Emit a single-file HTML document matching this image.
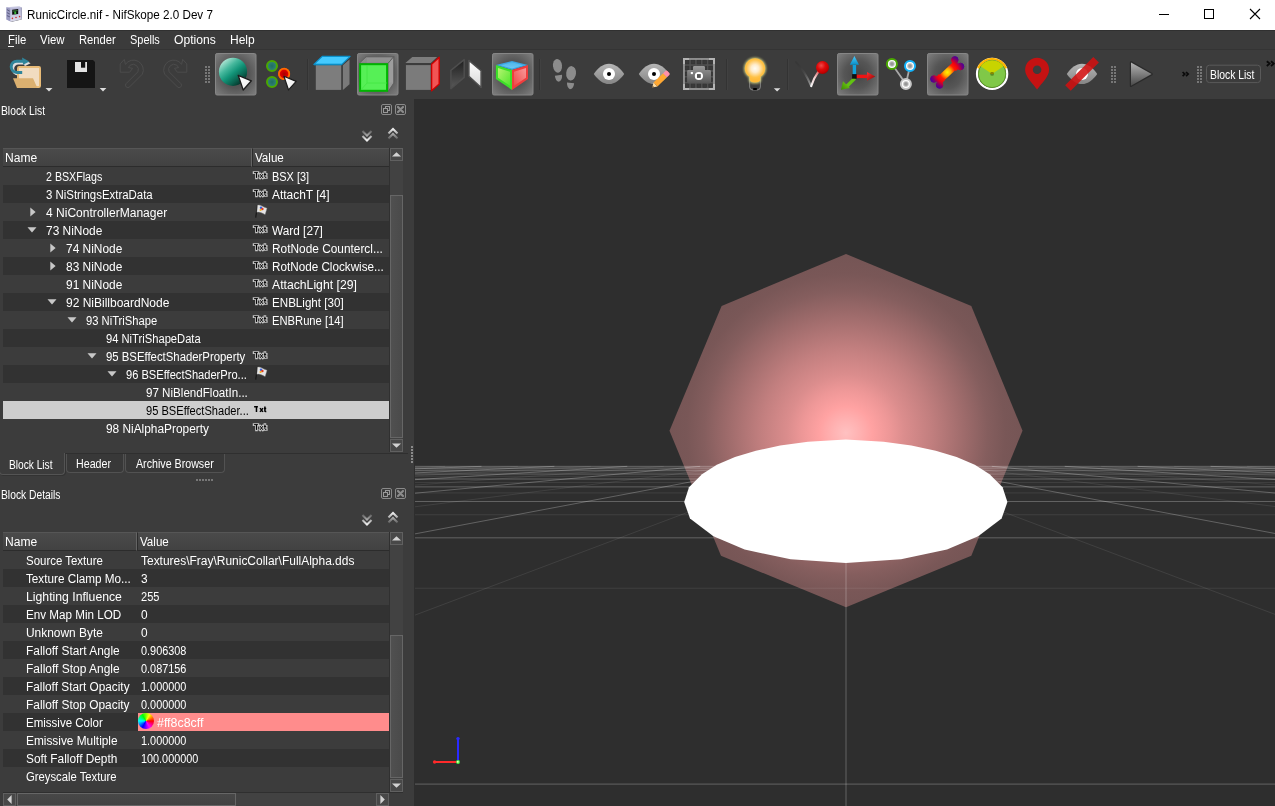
<!DOCTYPE html>
<html><head><meta charset="utf-8"><title>NifSkope</title>
<style>
*{box-sizing:border-box}
html,body{margin:0;padding:0}
body{width:1275px;height:806px;overflow:hidden;position:relative;background:#3c3c3c;font-family:"Liberation Sans",sans-serif;font-size:12px;color:#fff;line-height:18px}
.a{position:absolute}
.t{position:absolute;white-space:nowrap;transform-origin:0 50%;height:18px;line-height:18px}
#title{left:0;top:0;width:1275px;height:30px;background:#fff}
#menu{left:0;top:30px;width:1275px;height:20px;background:#3b3b3b;border-bottom:1px solid #343434;border-top:1px solid #303030}
#tool{left:0;top:50px;width:1275px;height:49px;background:#3c3c3c}
.chk{position:absolute;border-radius:3px;background:radial-gradient(ellipse at center,#4a4a4a 0%,#5a5a5a 60%,#6e6e6e 100%);border:1px solid #707070}
.sep{position:absolute;width:1px;background:#353535;top:59px;height:31px}
.row{position:absolute;left:3px;width:386px;height:18px}
.r0{background:#3c3c3c}.r1{background:#323232}
.hdr{position:absolute;height:19px;background:linear-gradient(#4a4a4a,#424242);border-top:1px solid #565656;border-bottom:1px solid #2c2c2c}
.sb{position:absolute;background:#424242}
.sbb{position:absolute;background:#484848;border:1px solid #606060}
.sbh{position:absolute;background:linear-gradient(90deg,#505050,#4a4a4a);border:1px solid #666}
.tab{position:absolute;border:1px solid #2d2d2d;border-top:none;border-radius:0 0 4px 4px;background:#3c3c3c}
.dbtn{position:absolute;width:11px;height:11px;border:1px solid #8a8a8a;border-radius:2px}
</style></head><body>

<div id="title" class="a"></div>
<svg class="a" style="left:6px;top:6px" width="16" height="16" viewBox="0 0 16 16">
<defs><linearGradient id="ic1" x1="0" y1="0" x2="0" y2="1"><stop offset="0" stop-color="#b4b4d4"/><stop offset="1" stop-color="#dcdcec"/></linearGradient></defs>
<path d="M4.6 15.6L15.8 12.9L15.8 13.6L4.9 16Z" fill="#6a6a78"/>
<path d="M0.4 1.3L13.4 0.3L15.6 1.5L15.6 12.8L4.5 15.6L0.4 13.4Z" fill="#c6c6e0"/>
<path d="M0.4 1.3L4.5 2.6L4.5 15.6L0.4 13.4Z" fill="#9a9ac0"/>
<path d="M4.5 2.6L15.6 1.5L15.6 12.8L4.5 15.6Z" fill="url(#ic1)"/>
<path d="M14.9 1.6L15.6 1.5L15.6 12.8L14.9 13Z" fill="#8c8ca8"/>
<path d="M6.2 3.8L12.2 3.1L12.2 7.9L6.2 8.8Z" fill="#0c0c0c"/>
<path d="M6.7 4.5L11.7 3.9L11.7 5.1L6.7 5.7Z" fill="#356e35"/>
<rect x="8.3" y="5.5" width="1.9" height="2.6" fill="#3cb83c"/>
<circle cx="6.4" cy="12.4" r="0.8" fill="#d03030"/><circle cx="10" cy="11.5" r="0.8" fill="#d03030"/><circle cx="13.6" cy="10.6" r="0.8" fill="#d03030"/>
<path d="M0.9 3.6L3.8 5.2M0.9 6.6L3.8 8M0.9 9.6L3.8 10.8" stroke="#56567a" stroke-width="0.9"/>
</svg>
<span class="t" style="left:27.3px;top:5.5px;transform:scaleX(0.9713);color:#000;">RunicCircle.nif - NifSkope 2.0 Dev 7</span>
<svg class="a" style="left:1150px;top:0" width="125" height="30" viewBox="0 0 125 30">
<path d="M9 14.5H19" stroke="#000" stroke-width="1"/>
<rect x="54.5" y="9.5" width="9" height="9" fill="none" stroke="#000" stroke-width="1"/>
<path d="M100 9L110 19M110 9L100 19" stroke="#000" stroke-width="1.1"/>
</svg>
<div id="menu" class="a"></div>
<span class="t" style="left:8.0px;top:31.0px;transform:scaleX(0.9460);color:#fff;">File</span>
<span class="t" style="left:40.3px;top:31.0px;transform:scaleX(0.9497);color:#fff;">View</span>
<span class="t" style="left:79.2px;top:31.0px;transform:scaleX(0.9350);color:#fff;">Render</span>
<span class="t" style="left:130.2px;top:31.0px;transform:scaleX(0.9117);color:#fff;">Spells</span>
<span class="t" style="left:174.3px;top:31.0px;transform:scaleX(1.0086);color:#fff;">Options</span>
<span class="t" style="left:230.3px;top:31.0px;transform:scaleX(1.0005);color:#fff;">Help</span>
<div class="a" style="left:8px;top:46px;width:6px;height:1px;background:#f0f0f0"></div>
<div id="tool" class="a"></div>
<svg class="a" style="left:0;top:50px" width="1275" height="49" viewBox="0 50 1275 49">
<defs>
<radialGradient id="ck" cx="0.5" cy="0.5" r="0.75"><stop offset="0" stop-color="#454545"/><stop offset="0.45" stop-color="#565656"/><stop offset="1" stop-color="#858585"/></radialGradient>
<linearGradient id="sph" x1="0.18" y1="0.1" x2="0.85" y2="0.92"><stop offset="0" stop-color="#aee4d3"/><stop offset="0.28" stop-color="#46b89d"/><stop offset="0.52" stop-color="#129478"/><stop offset="0.78" stop-color="#0a5f4c"/><stop offset="1" stop-color="#042a22"/></linearGradient>
<linearGradient id="cur" x1="0" y1="0" x2="1" y2="1"><stop offset="0" stop-color="#fff"/><stop offset="0.6" stop-color="#f4f4f4"/><stop offset="1" stop-color="#bdbdbd"/></linearGradient>
<linearGradient id="eyeg" x1="0" y1="0" x2="0" y2="1"><stop offset="0" stop-color="#b6b6b6"/><stop offset="1" stop-color="#858585"/></linearGradient>
<linearGradient id="camg" x1="0" y1="0" x2="0" y2="1"><stop offset="0" stop-color="#9a9a9a"/><stop offset="1" stop-color="#555"/></linearGradient>
<linearGradient id="plg" x1="0" y1="0" x2="0" y2="1"><stop offset="0" stop-color="#b4b4b4"/><stop offset="1" stop-color="#484848"/></linearGradient>
<linearGradient id="mdk" x1="0" y1="0" x2="0" y2="1"><stop offset="0" stop-color="#1e1e1e"/><stop offset="1" stop-color="#5a5a5a"/></linearGradient>
<linearGradient id="mwh" x1="0" y1="0" x2="0" y2="1"><stop offset="0" stop-color="#fff"/><stop offset="1" stop-color="#d8d8d8"/></linearGradient>
<radialGradient id="bulb" gradientUnits="userSpaceOnUse" cx="755" cy="68.5" r="11"><stop offset="0" stop-color="#fffdf4"/><stop offset="0.35" stop-color="#ffeccc"/><stop offset="0.8" stop-color="#ffc248"/><stop offset="1" stop-color="#ffba3a"/></radialGradient>
<radialGradient id="bone" gradientUnits="userSpaceOnUse" cx="947.3" cy="72.3" r="18"><stop offset="0" stop-color="#fff200"/><stop offset="0.2" stop-color="#ffb000"/><stop offset="0.42" stop-color="#ff1a00"/><stop offset="0.62" stop-color="#f00010"/><stop offset="0.85" stop-color="#7a0070"/><stop offset="1" stop-color="#4a0098"/></radialGradient>
<radialGradient id="ball" cx="0.4" cy="0.35" r="0.7"><stop offset="0" stop-color="#f04a4a"/><stop offset="0.45" stop-color="#de0a0a"/><stop offset="0.8" stop-color="#c40000"/><stop offset="1" stop-color="#960000"/></radialGradient>
<radialGradient id="nd" cx="0.5" cy="0.5" r="0.5"><stop offset="0" stop-color="#8c8c8c"/><stop offset="0.35" stop-color="#a8a8a8"/><stop offset="0.7" stop-color="#fff"/><stop offset="1" stop-color="#fff"/></radialGradient>
<radialGradient id="tl" cx="0.5" cy="0.5" r="0.5"><stop offset="0" stop-color="#1f6e60"/><stop offset="1" stop-color="#33857a"/></radialGradient>
<radialGradient id="rd" cx="0.5" cy="0.5" r="0.5"><stop offset="0" stop-color="#a80000"/><stop offset="0.6" stop-color="#d80000"/><stop offset="1" stop-color="#ff4a00"/></radialGradient>
<linearGradient id="cgG" x1="0" y1="0" x2="1" y2="1"><stop offset="0" stop-color="#b6f470"/><stop offset="1" stop-color="#52e62e"/></linearGradient><linearGradient id="cgR" x1="1" y1="0" x2="0" y2="1"><stop offset="0" stop-color="#f99a9a"/><stop offset="1" stop-color="#f04848"/></linearGradient><linearGradient id="cgB" x1="0" y1="0" x2="0" y2="1"><stop offset="0" stop-color="#4eb6ea"/><stop offset="1" stop-color="#6cc8f2"/></linearGradient>
<filter id="glow" x="-30%" y="-30%" width="160%" height="160%"><feGaussianBlur stdDeviation="0.9"/></filter>
<linearGradient id="bl" x1="0" y1="0" x2="0" y2="1"><stop offset="0" stop-color="#48ccff"/><stop offset="1" stop-color="#0a8ec4"/></linearGradient>
<linearGradient id="rdA" x1="0" y1="0" x2="1" y2="1"><stop offset="0" stop-color="#ff3030"/><stop offset="1" stop-color="#900000"/></linearGradient>
<linearGradient id="gnA" x1="1" y1="0" x2="0" y2="1"><stop offset="0" stop-color="#7ad818"/><stop offset="1" stop-color="#3a8800"/></linearGradient>
<linearGradient id="chkL" gradientUnits="userSpaceOnUse" x1="796" y1="62" x2="811" y2="86"><stop offset="0" stop-color="#2c2c2c" stop-opacity="0.3"/><stop offset="0.5" stop-color="#4a4a4a"/><stop offset="1" stop-color="#9a9a9a"/></linearGradient>
<linearGradient id="chkR" gradientUnits="userSpaceOnUse" x1="811" y1="86" x2="818" y2="72"><stop offset="0" stop-color="#f4f4f4"/><stop offset="0.6" stop-color="#f0d0d0"/><stop offset="1" stop-color="#e07070"/></linearGradient>
<g id="hd" fill="#777"><rect x="0" y="0" width="2" height="2"/><rect x="3" y="0" width="2" height="2"/><rect x="0" y="3" width="2" height="2"/><rect x="3" y="3" width="2" height="2"/><rect x="0" y="6" width="2" height="2"/><rect x="3" y="6" width="2" height="2"/><rect x="0" y="9" width="2" height="2"/><rect x="3" y="9" width="2" height="2"/><rect x="0" y="12" width="2" height="2"/><rect x="3" y="12" width="2" height="2"/><rect x="0" y="15" width="2" height="2"/><rect x="3" y="15" width="2" height="2"/></g>
<path id="eye" d="M-15.2 0C-11 -6 -6 -10.2 0 -10.2C6 -10.2 11 -6 15.2 0C11 6 6 10.1 0 10.1C-6 10.1 -11 6 -15.2 0Z"/>
<path id="cursor" d="M0 0L13.2 5.5L5 14.7Z"/>
</defs>
<!-- checked button backgrounds -->
<g fill="url(#ck)" stroke="#868686" stroke-width="1"><rect x="215.5" y="53.5" width="40.5" height="41.5" rx="1.6"/><rect x="357.5" y="53.5" width="40.5" height="41.5" rx="1.6"/><rect x="492.5" y="53.5" width="40.5" height="41.5" rx="1.6"/><rect x="837.5" y="53.5" width="40.5" height="41.5" rx="1.6"/><rect x="927.5" y="53.5" width="40.5" height="41.5" rx="1.6"/></g>
<!-- separators -->
<g stroke="#333" stroke-width="1"><path d="M307.5 59V90M539.5 59V90M726.5 59V90M787.5 59V90"/></g><g stroke="#414141" stroke-width="1"><path d="M308.5 59V90M540.5 59V90M727.5 59V90M788.5 59V90"/></g>
<!-- handles -->
<use href="#hd" x="205" y="66"/><use href="#hd" x="1111" y="66"/><use href="#hd" x="1197" y="66"/>
<!-- open folder -->
<g>
<path d="M22.4 74.2H18.4A5.6 5.6 0 0 1 18.4 63H25" fill="none" stroke="#dedede" stroke-width="2.8"/>
<path d="M23.6 59.6L30.6 63.2L24.6 66.2Z" fill="#dedede"/>
<rect x="17" y="66" width="24" height="22" rx="2.2" fill="#e8bb77"/>
<rect x="19" y="68" width="20" height="18" fill="#f1dcc0"/>
<path d="M13 78.3H33L36.6 86.3V88H17Z" fill="#dbb070"/>
<path d="M22.2 72.4H16.8A5.6 5.6 0 0 1 16.8 61.2H23" fill="none" stroke="#2f859b" stroke-width="3"/>
<path d="M22 57.4L29.4 61.4L23.2 64.8Z" fill="#2f859b"/>
<path d="M45.5 88H52.5L49 91.4Z" fill="#dcdcdc"/>
</g>
<!-- save -->
<g>
<path d="M67 60H93L95 62V88H67Z" fill="#151515"/>
<rect x="75" y="62" width="12" height="10" fill="#e4e4e4"/><rect x="81" y="62" width="4.2" height="5.7" fill="#151515"/>
<path d="M99.7 88H106.4L103 91.4Z" fill="#dcdcdc"/>
</g>
<!-- undo / redo (disabled outlines) -->
<g id="undo" fill="none" stroke="#4c4c4c" stroke-width="1" stroke-linejoin="round">
<path d="M120.2 63.9L124.3 59.4L125.4 64.3A9.85 9.85 0 0 1 142.4 74.1L129.6 86.9A2.4 2.4 0 0 1 126.2 83.5L137.9 71.8A5.3 5.3 0 0 0 130.3 65.1L128.4 67.5L132.6 68.4L129.6 72.2L120.2 72.2Z"/>
</g>
<use href="#undo" transform="translate(307,0) scale(-1,1)"/>
<!-- sphere select -->
<circle cx="233" cy="71.8" r="14.1" fill="url(#sph)"/>
<use href="#cursor" x="238.2" y="75.3" fill="url(#cur)" stroke="#1c1c1c" stroke-width="1.3" stroke-linejoin="round"/>
<!-- three circles -->
<circle cx="272" cy="66" r="5" fill="url(#tl)" stroke="#4aa800" stroke-width="2"/>
<circle cx="272" cy="82" r="5" fill="url(#tl)" stroke="#4aa800" stroke-width="2"/>
<circle cx="284.1" cy="73.9" r="6" fill="url(#rd)"/><circle cx="284.1" cy="73.9" r="5.2" fill="none" stroke="#ff6a00" stroke-width="1.7"/>
<use href="#cursor" x="283.9" y="76.3" fill="url(#cur)" stroke="#1c1c1c" stroke-width="1.3" stroke-linejoin="round" transform="translate(283.9,76.3) scale(0.93) translate(-283.9,-76.3)"/>
<!-- cube top (blue) -->
<g>
<rect x="315.8" y="65.1" width="25.4" height="24.8" fill="#7d7d7d"/>
<path d="M342.9 65.2L349.5 59.6V84.3L342.9 89.9Z" fill="#7a7a7a"/>
<path d="M313.9 64.4L322.2 56.4H350.1L341.8 64.4Z" fill="#44caff" stroke="#0c92cc" stroke-width="1.2" stroke-linejoin="round"/>
<path d="M314 64.6H341.8" stroke="#0a8cc4" stroke-width="1.4"/>
</g>
<!-- cube front (green) -->
<g>
<rect x="366.2" y="56.8" width="27.5" height="26.3" fill="#8f8f8f" fill-opacity="0.55" stroke="#5a5a5a" stroke-width="1"/>
<path d="M359.2 63.4L366.2 56.8H393.7L388 63.4Z" fill="#9a9a9a" fill-opacity="0.75" stroke="#5c5c5c" stroke-width="0.8"/>
<path d="M388 63.4L393.7 56.8V83.1L388 91.6Z" fill="#a6a6a6" fill-opacity="0.8" stroke="#5c5c5c" stroke-width="0.8"/>
<rect x="360.1" y="64.2" width="27" height="26.6" fill="#56f056" stroke="#00b400" stroke-width="2"/>
<path d="M361 89.8L367 83H387M367 83V65" stroke="#3ee63e" stroke-width="1" fill="none" opacity="0.7"/>
</g>
<!-- cube right (red) -->
<g>
<rect x="405.9" y="65.1" width="24.9" height="24.8" fill="#7b7b7b"/>
<path d="M405.4 63L412.3 56.9H437.2L430.8 63Z" fill="#7d7d7d"/>
<path d="M431.6 64.2L439.2 57.2V84L431.6 90.8Z" fill="#f25555" stroke="#cc0000" stroke-width="1.4" stroke-linejoin="round"/>
</g>
<!-- mirror -->
<path d="M450.9 70.4L464.2 59.6V77.4L450.9 88.6Z" fill="url(#mdk)" stroke="#4e4e4e" stroke-width="1.5" stroke-linejoin="round"/>
<path d="M468.9 60.4L481.1 70.8V87.5L468.9 76.3Z" fill="url(#mwh)" stroke="#4e4e4e" stroke-width="1.5" stroke-linejoin="round"/>
<!-- rgb cube -->
<g stroke-linejoin="round">
<path d="M495.9 65.1L512 60.9L528 65.1L512 70Z" fill="#3aa6e2"/><path d="M500.6 65.2L512 62.3L523.4 65.2L512 68.5Z" fill="url(#cgB)"/>
<path d="M495.9 65.1L512 70V89.9L495.9 79Z" fill="#3de02a"/><path d="M498 68L510 71.8V85.8L498 77.8Z" fill="url(#cgG)"/>
<path d="M512 70L528 65.1V79L512 89.9Z" fill="#ef3d3d"/><path d="M514 71.8L526 68V77.8L514 85.8Z" fill="url(#cgR)"/>
</g>
<!-- footsteps -->
<g fill="#8c8c8c">
<ellipse cx="557.5" cy="65.8" rx="4.5" ry="6.9" transform="rotate(-6 557.5 65.8)"/>
<path d="M554.9 75.7L562 74.8C562.4 78.4 561 81.2 558.9 81.7C556.8 81.6 555.2 79 554.9 75.7Z"/>
<ellipse cx="571.1" cy="73.3" rx="4.9" ry="7.2" transform="rotate(6 571.1 73.3)"/>
<path d="M567 82.6L574.1 83.2C573.9 86.6 572.2 89.1 570 89.2C568 88.6 566.8 85.8 567 82.6Z"/>
</g>
<!-- eye -->
<use href="#eye" x="609" y="73.9" fill="url(#eyeg)"/><circle cx="609" cy="73.9" r="6" fill="#fff"/><circle cx="609" cy="73.9" r="2" fill="#000"/>
<!-- eye + pencil -->
<use href="#eye" x="654" y="73.9" fill="url(#eyeg)"/><circle cx="654" cy="73.9" r="6" fill="#fff"/><circle cx="654" cy="73.9" r="2" fill="#000"/>
<g transform="translate(652.2,87.6) rotate(-44)">
<path d="M0 0L4.6 -2.8V2.8Z" fill="#ffdca0"/><path d="M0 0L1.7 -1V1Z" fill="#5a4020"/>
<rect x="4.6" y="-2.8" width="13.2" height="5.6" fill="#ffa832"/>
<path d="M17.8 -2.8H21.1A1.4 1.4 0 0 1 22.5 -1.4V1.4A1.4 1.4 0 0 1 21.1 2.8H17.8Z" fill="#ff8fa8"/>
</g>
<!-- camera grid -->
<g>
<rect x="684" y="59" width="30" height="30" fill="#505050" stroke="#8e8e8e" stroke-width="2"/>
<g fill="#393939" stroke="#303030" stroke-width="0.5"><rect x="685.2" y="60.2" width="3.8" height="3.8"/><rect x="685.2" y="66.1" width="3.8" height="3.8"/><rect x="685.2" y="72.0" width="3.8" height="3.8"/><rect x="685.2" y="77.9" width="3.8" height="3.8"/><rect x="685.2" y="83.8" width="3.8" height="3.8"/><rect x="691.1" y="60.2" width="3.8" height="3.8"/><rect x="691.1" y="66.1" width="3.8" height="3.8"/><rect x="691.1" y="72.0" width="3.8" height="3.8"/><rect x="691.1" y="77.9" width="3.8" height="3.8"/><rect x="691.1" y="83.8" width="3.8" height="3.8"/><rect x="697.0" y="60.2" width="3.8" height="3.8"/><rect x="697.0" y="66.1" width="3.8" height="3.8"/><rect x="697.0" y="72.0" width="3.8" height="3.8"/><rect x="697.0" y="77.9" width="3.8" height="3.8"/><rect x="697.0" y="83.8" width="3.8" height="3.8"/><rect x="702.9" y="60.2" width="3.8" height="3.8"/><rect x="702.9" y="66.1" width="3.8" height="3.8"/><rect x="702.9" y="72.0" width="3.8" height="3.8"/><rect x="702.9" y="77.9" width="3.8" height="3.8"/><rect x="702.9" y="83.8" width="3.8" height="3.8"/><rect x="708.8" y="60.2" width="3.8" height="3.8"/><rect x="708.8" y="66.1" width="3.8" height="3.8"/><rect x="708.8" y="72.0" width="3.8" height="3.8"/><rect x="708.8" y="77.9" width="3.8" height="3.8"/><rect x="708.8" y="83.8" width="3.8" height="3.8"/></g>
<path d="M684 64V59H689M709 59H714V64M714 84V89H709M689 89H684V84" stroke="#b4b4b4" stroke-width="2" fill="none"/>
<path d="M687.1 71.4A1.3 1.3 0 0 1 688.4 70.1H693V67.2A1.3 1.3 0 0 1 694.3 65.9H703.7A1.3 1.3 0 0 1 705 67.2V70.1H709.7A1.3 1.3 0 0 1 711 71.4V82.1A1.3 1.3 0 0 1 709.7 83.4H688.4A1.3 1.3 0 0 1 687.1 82.1Z" fill="url(#camg)"/>
<circle cx="698.9" cy="76" r="4.1" fill="#fff"/><rect x="697" y="74.1" width="3.8" height="3.8" fill="#575757"/>
<rect x="690.8" y="72" width="2.1" height="2.1" fill="#fff"/>
</g>
<!-- bulb -->
<g>
<path d="M749.6 77V86.5C749.6 89 751.6 90.2 755 90.2C758.4 90.2 760.4 89 760.4 86.5V77" fill="none" stroke="#7e7e7e" stroke-width="1.1"/>
<rect x="753.2" y="88" width="3.6" height="2.2" fill="#000"/>
<path d="M755 57.4A11 11 0 0 1 761.2 77.6V80C761.2 82.6 758.4 83.6 755 83.6C751.6 83.6 748.8 82.6 748.8 80V77.6A11 11 0 0 1 755 57.4Z" fill="#ecec8c" opacity="0.75" filter="url(#glow)"/>
<path d="M755 58.2A10.2 10.2 0 0 1 760.3 77.1V79.6C760.3 81.6 758 82.6 755 82.6C752 82.6 749.7 81.6 749.7 79.6V77.1A10.2 10.2 0 0 1 755 58.2Z" fill="url(#bulb)"/>
<path d="M773.8 88.2H780.4L777.1 91.4Z" fill="#dcdcdc"/>
</g>
<!-- pin check -->
<path d="M795.8 62C802 68 807 76 811.2 86.1" fill="none" stroke="url(#chkL)" stroke-width="2" stroke-linecap="round"/>
<path d="M811.2 86.1C812.6 81 815 76.4 818.4 71.6" fill="none" stroke="url(#chkR)" stroke-width="2.1" stroke-linecap="round"/>
<circle cx="822.5" cy="67.5" r="6.5" fill="url(#ball)"/>
<!-- axes -->
<g>
<path d="M852.7 65H856.1V75H852.7Z" fill="#12a2da"/><path d="M854.4 55.9L859 64.8H849.8Z" fill="url(#bl)"/>
<path d="M856 74.7H867.2V78.1H856Z" fill="#f01414"/><path d="M875.3 76.4L867 80.8V72Z" fill="url(#rdA)"/>
<path d="M853.6 77.2L856 79.6L848 87.4L845.6 85Z" fill="#62c212"/><path d="M841 89.8L843 81.2L849.8 88Z" fill="url(#gnA)"/>
<rect x="852.1" y="74.1" width="4.6" height="4.6" fill="#111"/>
</g>
<!-- nodes -->
<g>
<path d="M891.9 63.9L905.9 84M910 66L905.9 84" stroke="#a8a8a8" stroke-width="1.8"/>
<circle cx="891.9" cy="63.9" r="5" fill="url(#nd)" stroke="#4aa800" stroke-width="2"/>
<circle cx="910" cy="66" r="5" fill="url(#nd)" stroke="#12b2fa" stroke-width="2"/>
<circle cx="905.9" cy="84" r="5" fill="url(#nd)" stroke="#c6c6c6" stroke-width="2"/>
</g>
<!-- bone -->
<g fill="url(#bone)" stroke="url(#bone)">
<path d="M939 80.4L955.4 65" stroke-width="7.4" fill="none"/>
<circle cx="933.9" cy="79" r="3.3"/><circle cx="939.6" cy="85" r="3.3"/><circle cx="954.8" cy="59.9" r="3.3"/><circle cx="960.5" cy="66.5" r="3.3"/>
<path d="M934 79L940 85L945 80L939 74Z M950 66L956 71L960.5 66.5L955 60Z" stroke="none"/>
</g>
<!-- pie -->
<g>
<circle cx="992.1" cy="73.9" r="15.1" fill="none" stroke="#fff" stroke-width="2.2"/>
<path d="M977.05 67.97A16.2 16.2 0 0 1 1007.15 67.97L1005.1 68.8A14 14 0 0 0 979.1 68.8Z" fill="#ffb400"/>
<circle cx="992.1" cy="73.9" r="13.6" fill="#80c848" stroke="#5c9c22" stroke-width="0.8"/>
<path d="M992.1 73.9L980.7 66.2A13.8 13.8 0 0 1 1003.5 66.2Z" fill="#c8d400"/>
<circle cx="992.1" cy="73.9" r="1.9" fill="#5a8c22"/><path d="M990.2 73.9A1.9 1.9 0 0 1 994 73.9Z" fill="#8a8800"/>
</g>
<!-- marker -->
<path d="M1037.1 57.8A12 12 0 0 1 1049.1 69.8C1049.1 77 1041 84 1037.1 89.6C1033.2 84 1025.1 77 1025.1 69.8A12 12 0 0 1 1037.1 57.8ZM1037.1 65.4A4.3 4.3 0 0 0 1037.1 74A4.3 4.3 0 0 0 1037.1 65.4Z" fill="#c41212" fill-rule="evenodd"/>
<!-- eye strike -->
<use href="#eye" x="1082" y="73.9" fill="url(#eyeg)"/><circle cx="1082" cy="73.9" r="6" fill="#fff"/>
<path d="M1067.95 88L1096.1 59.75" stroke="#d01010" stroke-opacity="0.88" stroke-width="7.8"/>
<!-- play -->
<path d="M1131 62.4L1151.6 74.1L1131 85.8Z" fill="url(#plg)" stroke="#2a2a2a" stroke-width="2.4" stroke-linejoin="round"/>
<path d="M1131 62.4L1151.6 74.1L1131 85.8Z" fill="url(#plg)"/>
<!-- chevrons -->
<path d="M1182.6 72L1184.8 74.1L1182.6 76.2M1186 72L1188.2 74.1L1186 76.2" fill="none" stroke="#0a0a0a" stroke-width="1.7"/>
<path d="M1266.8 61.2L1269.6 63.6L1266.8 66M1271 61.2L1273.8 63.6L1271 66" fill="none" stroke="#0a0a0a" stroke-width="1.8"/>
<!-- Block List button -->
<rect x="1206.5" y="65.2" width="54" height="17.4" rx="3" fill="#3c3c3c" stroke="#5a5a5a"/>
</svg>

<span class="t" style="left:1210.3px;top:65.7px;transform:scaleX(0.8628);">Block List</span>
<span class="t" style="left:0.9px;top:102.0px;transform:scaleX(0.8589);">Block List</span>
<div class="dbtn" style="left:381px;top:104px"><svg class="a" style="left:0;top:0" width="9" height="9" viewBox="0 0 9 9"><rect x="3.5" y="1.5" width="4" height="4" fill="none" stroke="#9a9a9a"/><rect x="1.5" y="3.5" width="4" height="4" fill="#3c3c3c" stroke="#9a9a9a"/></svg></div><div class="dbtn" style="left:395px;top:104px"><svg class="a" style="left:0;top:0" width="9" height="9" viewBox="0 0 9 9"><path d="M2 2L7 7M7 2L2 7" stroke="#8c8c8c" stroke-width="2.2" stroke-linecap="round"/></svg></div>
<svg class="a" style="left:360px;top:128px" width="14" height="16" viewBox="0 0 14 16"><defs><linearGradient id="cg136" x1="0" y1="0" x2="0" y2="1"><stop offset="0" stop-color="#666"/><stop offset="1" stop-color="#eee"/></linearGradient><linearGradient id="cu136" x1="0" y1="1" x2="0" y2="0"><stop offset="0" stop-color="#666"/><stop offset="1" stop-color="#eee"/></linearGradient></defs><path d="M2.5 3L7 7.5L11.5 3M2.5 8L7 12.5L11.5 8" fill="none" stroke="url(#cg136)" stroke-width="2.1"/></svg><svg class="a" style="left:386px;top:126px" width="14" height="16" viewBox="0 0 14 16"><path d="M2.5 7.5L7 3L11.5 7.5M2.5 12.5L7 8L11.5 12.5" fill="none" stroke="url(#cu136)" stroke-width="2.1"/></svg>
<div class="hdr" style="left:3px;top:148px;width:249px;border-right:1px solid #646464"></div><div class="hdr" style="left:252px;top:148px;width:137px;border-left:1px solid #2c2c2c"></div><span class="t" style="left:4.8px;top:148.5px;transform:scaleX(1.0058);">Name</span><span class="t" style="left:254.5px;top:148.5px;transform:scaleX(0.9665);">Value</span>
<div class="row r0" style="top:167px"></div>
<span class="t" style="left:46.0px;top:167.5px;transform:scaleX(0.8888);">2 BSXFlags</span>
<svg class="a" style="left:252px;top:169.0px" width="20" height="14" viewBox="0 0 20 14"><path d="M2.1 3.65H5.9M4.48 3.65V8.9M8 5.1L11 8.9M11 5.1L8 8.9M12.9 3.6V7.9Q12.9 8.6 14.3 8.5M12 5.4H14.2" fill="none" stroke="#c4c4c4" stroke-width="2.7" stroke-linecap="square" stroke-linejoin="miter"/><path d="M2.1 3.65H5.9M4.48 3.65V8.9M8 5.1L11 8.9M11 5.1L8 8.9M12.9 3.6V7.9Q12.9 8.6 14.3 8.5M12 5.4H14.2" fill="none" stroke="#000" stroke-width="1"/></svg>
<span class="t" style="left:272.0px;top:167.5px;transform:scaleX(0.9101);">BSX [3]</span>
<div class="row r1" style="top:185px"></div>
<span class="t" style="left:46.0px;top:185.5px;transform:scaleX(0.9524);">3 NiStringsExtraData</span>
<svg class="a" style="left:252px;top:187.0px" width="20" height="14" viewBox="0 0 20 14"><path d="M2.1 3.65H5.9M4.48 3.65V8.9M8 5.1L11 8.9M11 5.1L8 8.9M12.9 3.6V7.9Q12.9 8.6 14.3 8.5M12 5.4H14.2" fill="none" stroke="#c4c4c4" stroke-width="2.7" stroke-linecap="square" stroke-linejoin="miter"/><path d="M2.1 3.65H5.9M4.48 3.65V8.9M8 5.1L11 8.9M11 5.1L8 8.9M12.9 3.6V7.9Q12.9 8.6 14.3 8.5M12 5.4H14.2" fill="none" stroke="#000" stroke-width="1"/></svg>
<span class="t" style="left:272.0px;top:185.5px;transform:scaleX(0.9954);">AttachT [4]</span>
<div class="row r0" style="top:203px"></div>
<svg class="a" style="left:30px;top:207.0px" width="6" height="10" viewBox="0 0 6 10"><path d="M0.3 0.5L5.6 5L0.3 9.5Z" fill="#c8c8c8"/></svg>
<span class="t" style="left:46.0px;top:203.5px;transform:scaleX(1.0039);">4 NiControllerManager</span>
<svg class="a" style="left:254px;top:204.0px" width="14" height="15" viewBox="0 0 14 15"><path d="M1.7 13.6L3.5 1" stroke="#161616" stroke-width="1.2"/><path d="M3.5 1.2C6 0.3 8 2.6 13 4.2L11.1 10.6C8 9 5.5 7.6 2.9 8.3Z" fill="#e4e4e4" stroke="#8a8a8a" stroke-width="0.4"/><circle cx="7" cy="3.7" r="1.25" fill="#3a63d8"/><circle cx="8.4" cy="5" r="1.25" fill="#e03a20"/><circle cx="6.6" cy="6" r="1.1" fill="#f0b020"/></svg>
<div class="row r1" style="top:221px"></div>
<svg class="a" style="left:27.4px;top:227.0px" width="10" height="6" viewBox="0 0 10 6"><path d="M0.5 0.3L9.5 0.3L5 5.6Z" fill="#c8c8c8"/></svg>
<span class="t" style="left:46.0px;top:221.5px;transform:scaleX(0.9929);">73 NiNode</span>
<svg class="a" style="left:252px;top:223.0px" width="20" height="14" viewBox="0 0 20 14"><path d="M2.1 3.65H5.9M4.48 3.65V8.9M8 5.1L11 8.9M11 5.1L8 8.9M12.9 3.6V7.9Q12.9 8.6 14.3 8.5M12 5.4H14.2" fill="none" stroke="#c4c4c4" stroke-width="2.7" stroke-linecap="square" stroke-linejoin="miter"/><path d="M2.1 3.65H5.9M4.48 3.65V8.9M8 5.1L11 8.9M11 5.1L8 8.9M12.9 3.6V7.9Q12.9 8.6 14.3 8.5M12 5.4H14.2" fill="none" stroke="#000" stroke-width="1"/></svg>
<span class="t" style="left:272.0px;top:221.5px;transform:scaleX(0.9852);">Ward [27]</span>
<div class="row r0" style="top:239px"></div>
<svg class="a" style="left:50px;top:243.0px" width="6" height="10" viewBox="0 0 6 10"><path d="M0.3 0.5L5.6 5L0.3 9.5Z" fill="#c8c8c8"/></svg>
<span class="t" style="left:66.0px;top:239.5px;transform:scaleX(0.9929);">74 NiNode</span>
<svg class="a" style="left:252px;top:241.0px" width="20" height="14" viewBox="0 0 20 14"><path d="M2.1 3.65H5.9M4.48 3.65V8.9M8 5.1L11 8.9M11 5.1L8 8.9M12.9 3.6V7.9Q12.9 8.6 14.3 8.5M12 5.4H14.2" fill="none" stroke="#c4c4c4" stroke-width="2.7" stroke-linecap="square" stroke-linejoin="miter"/><path d="M2.1 3.65H5.9M4.48 3.65V8.9M8 5.1L11 8.9M11 5.1L8 8.9M12.9 3.6V7.9Q12.9 8.6 14.3 8.5M12 5.4H14.2" fill="none" stroke="#000" stroke-width="1"/></svg>
<span class="t" style="left:272.0px;top:239.5px;transform:scaleX(0.9890);">RotNode Countercl...</span>
<div class="row r1" style="top:257px"></div>
<svg class="a" style="left:50px;top:261.0px" width="6" height="10" viewBox="0 0 6 10"><path d="M0.3 0.5L5.6 5L0.3 9.5Z" fill="#c8c8c8"/></svg>
<span class="t" style="left:66.0px;top:257.5px;transform:scaleX(0.9929);">83 NiNode</span>
<svg class="a" style="left:252px;top:259.0px" width="20" height="14" viewBox="0 0 20 14"><path d="M2.1 3.65H5.9M4.48 3.65V8.9M8 5.1L11 8.9M11 5.1L8 8.9M12.9 3.6V7.9Q12.9 8.6 14.3 8.5M12 5.4H14.2" fill="none" stroke="#c4c4c4" stroke-width="2.7" stroke-linecap="square" stroke-linejoin="miter"/><path d="M2.1 3.65H5.9M4.48 3.65V8.9M8 5.1L11 8.9M11 5.1L8 8.9M12.9 3.6V7.9Q12.9 8.6 14.3 8.5M12 5.4H14.2" fill="none" stroke="#000" stroke-width="1"/></svg>
<span class="t" style="left:272.0px;top:257.5px;transform:scaleX(0.9747);">RotNode Clockwise...</span>
<div class="row r0" style="top:275px"></div>
<span class="t" style="left:66.0px;top:275.5px;transform:scaleX(0.9929);">91 NiNode</span>
<svg class="a" style="left:252px;top:277.0px" width="20" height="14" viewBox="0 0 20 14"><path d="M2.1 3.65H5.9M4.48 3.65V8.9M8 5.1L11 8.9M11 5.1L8 8.9M12.9 3.6V7.9Q12.9 8.6 14.3 8.5M12 5.4H14.2" fill="none" stroke="#c4c4c4" stroke-width="2.7" stroke-linecap="square" stroke-linejoin="miter"/><path d="M2.1 3.65H5.9M4.48 3.65V8.9M8 5.1L11 8.9M11 5.1L8 8.9M12.9 3.6V7.9Q12.9 8.6 14.3 8.5M12 5.4H14.2" fill="none" stroke="#000" stroke-width="1"/></svg>
<span class="t" style="left:272.0px;top:275.5px;transform:scaleX(1.0175);">AttachLight [29]</span>
<div class="row r1" style="top:293px"></div>
<svg class="a" style="left:47.4px;top:299.0px" width="10" height="6" viewBox="0 0 10 6"><path d="M0.5 0.3L9.5 0.3L5 5.6Z" fill="#c8c8c8"/></svg>
<span class="t" style="left:66.0px;top:293.5px;transform:scaleX(0.9999);">92 NiBillboardNode</span>
<svg class="a" style="left:252px;top:295.0px" width="20" height="14" viewBox="0 0 20 14"><path d="M2.1 3.65H5.9M4.48 3.65V8.9M8 5.1L11 8.9M11 5.1L8 8.9M12.9 3.6V7.9Q12.9 8.6 14.3 8.5M12 5.4H14.2" fill="none" stroke="#c4c4c4" stroke-width="2.7" stroke-linecap="square" stroke-linejoin="miter"/><path d="M2.1 3.65H5.9M4.48 3.65V8.9M8 5.1L11 8.9M11 5.1L8 8.9M12.9 3.6V7.9Q12.9 8.6 14.3 8.5M12 5.4H14.2" fill="none" stroke="#000" stroke-width="1"/></svg>
<span class="t" style="left:272.0px;top:293.5px;transform:scaleX(0.9674);">ENBLight [30]</span>
<div class="row r0" style="top:311px"></div>
<svg class="a" style="left:67.4px;top:317.0px" width="10" height="6" viewBox="0 0 10 6"><path d="M0.5 0.3L9.5 0.3L5 5.6Z" fill="#c8c8c8"/></svg>
<span class="t" style="left:86.0px;top:311.5px;transform:scaleX(0.9336);">93 NiTriShape</span>
<svg class="a" style="left:252px;top:313.0px" width="20" height="14" viewBox="0 0 20 14"><path d="M2.1 3.65H5.9M4.48 3.65V8.9M8 5.1L11 8.9M11 5.1L8 8.9M12.9 3.6V7.9Q12.9 8.6 14.3 8.5M12 5.4H14.2" fill="none" stroke="#c4c4c4" stroke-width="2.7" stroke-linecap="square" stroke-linejoin="miter"/><path d="M2.1 3.65H5.9M4.48 3.65V8.9M8 5.1L11 8.9M11 5.1L8 8.9M12.9 3.6V7.9Q12.9 8.6 14.3 8.5M12 5.4H14.2" fill="none" stroke="#000" stroke-width="1"/></svg>
<span class="t" style="left:272.0px;top:311.5px;transform:scaleX(0.9337);">ENBRune [14]</span>
<div class="row r1" style="top:329px"></div>
<span class="t" style="left:106.0px;top:329.5px;transform:scaleX(0.9320);">94 NiTriShapeData</span>
<div class="row r0" style="top:347px"></div>
<svg class="a" style="left:87.4px;top:353.0px" width="10" height="6" viewBox="0 0 10 6"><path d="M0.5 0.3L9.5 0.3L5 5.6Z" fill="#c8c8c8"/></svg>
<span class="t" style="left:106.0px;top:347.5px;transform:scaleX(0.9460);">95 BSEffectShaderProperty</span>
<svg class="a" style="left:252px;top:349.0px" width="20" height="14" viewBox="0 0 20 14"><path d="M2.1 3.65H5.9M4.48 3.65V8.9M8 5.1L11 8.9M11 5.1L8 8.9M12.9 3.6V7.9Q12.9 8.6 14.3 8.5M12 5.4H14.2" fill="none" stroke="#c4c4c4" stroke-width="2.7" stroke-linecap="square" stroke-linejoin="miter"/><path d="M2.1 3.65H5.9M4.48 3.65V8.9M8 5.1L11 8.9M11 5.1L8 8.9M12.9 3.6V7.9Q12.9 8.6 14.3 8.5M12 5.4H14.2" fill="none" stroke="#000" stroke-width="1"/></svg>
<div class="row r1" style="top:365px"></div>
<svg class="a" style="left:107.4px;top:371.0px" width="10" height="6" viewBox="0 0 10 6"><path d="M0.5 0.3L9.5 0.3L5 5.6Z" fill="#c8c8c8"/></svg>
<span class="t" style="left:126.0px;top:365.5px;transform:scaleX(0.9260);">96 BSEffectShaderPro...</span>
<svg class="a" style="left:254px;top:366.0px" width="14" height="15" viewBox="0 0 14 15"><path d="M1.7 13.6L3.5 1" stroke="#161616" stroke-width="1.2"/><path d="M3.5 1.2C6 0.3 8 2.6 13 4.2L11.1 10.6C8 9 5.5 7.6 2.9 8.3Z" fill="#e4e4e4" stroke="#8a8a8a" stroke-width="0.4"/><circle cx="7" cy="3.7" r="1.25" fill="#3a63d8"/><circle cx="8.4" cy="5" r="1.25" fill="#e03a20"/><circle cx="6.6" cy="6" r="1.1" fill="#f0b020"/></svg>
<div class="row r0" style="top:383px"></div>
<span class="t" style="left:146.0px;top:383.5px;transform:scaleX(0.9662);">97 NiBlendFloatIn...</span>
<div class="row r1" style="top:401px;background:#cdcdcd"></div>
<span class="t" style="left:146.0px;top:401.5px;transform:scaleX(0.9251);color:#000;">95 BSEffectShader...</span>
<svg class="a" style="left:252px;top:403.0px" width="20" height="14" viewBox="0 0 20 14"><path d="M2.1 3.65H5.9M4.48 3.65V8.9M8 5.1L11 8.9M11 5.1L8 8.9M12.9 3.6V7.9Q12.9 8.6 14.3 8.5M12 5.4H14.2" fill="none" stroke="#000" stroke-width="1.5"/></svg>
<div class="row r0" style="top:419px"></div>
<span class="t" style="left:106.0px;top:419.5px;transform:scaleX(0.9890);">98 NiAlphaProperty</span>
<svg class="a" style="left:252px;top:421.0px" width="20" height="14" viewBox="0 0 20 14"><path d="M2.1 3.65H5.9M4.48 3.65V8.9M8 5.1L11 8.9M11 5.1L8 8.9M12.9 3.6V7.9Q12.9 8.6 14.3 8.5M12 5.4H14.2" fill="none" stroke="#c4c4c4" stroke-width="2.7" stroke-linecap="square" stroke-linejoin="miter"/><path d="M2.1 3.65H5.9M4.48 3.65V8.9M8 5.1L11 8.9M11 5.1L8 8.9M12.9 3.6V7.9Q12.9 8.6 14.3 8.5M12 5.4H14.2" fill="none" stroke="#000" stroke-width="1"/></svg>
<div class="sb" style="left:390px;top:148px;width:13px;height:304px"></div><div class="sbb" style="left:390px;top:148px;width:13px;height:13px"><svg class="a" style="left:1px;top:3px" width="9" height="5" viewBox="0 0 9 5"><path d="M0 4.6L4.5 0.2L9 4.6Z" fill="#d2d2d2"/></svg></div><div class="sbb" style="left:390px;top:439px;width:13px;height:13px"><svg class="a" style="left:1px;top:3px" width="9" height="5" viewBox="0 0 9 5"><path d="M0 0.4L4.5 4.8L9 0.4Z" fill="#d2d2d2"/></svg></div><div class="sbh" style="left:390px;top:195px;width:13px;height:243px"></div>
<div class="a" style="left:65px;top:453px;width:343px;height:1px;background:#2f2f2f"></div>
<div class="tab" style="left:-1px;top:453px;width:66px;height:22px;border-color:#545454;box-shadow:1px 1px 0 #333"></div>
<div class="tab" style="left:66px;top:454px;width:58px;height:19px;background:#383838;border-color:#525252"></div>
<div class="tab" style="left:125px;top:454px;width:100px;height:19px;background:#383838;border-color:#525252"></div>
<span class="t" style="left:9.3px;top:456.0px;transform:scaleX(0.8472);">Block List</span>
<span class="t" style="left:76.2px;top:455.0px;transform:scaleX(0.8892);">Header</span>
<span class="t" style="left:135.8px;top:455.0px;transform:scaleX(0.8894);">Archive Browser</span>
<div class="a" style="left:196px;top:479px;width:18px;height:2px;background:repeating-linear-gradient(90deg,#777 0 2px,transparent 2px 3px)"></div>
<div class="a" style="left:411px;top:446px;width:2px;height:18px;background:repeating-linear-gradient(180deg,#8a8a8a 0 2px,transparent 2px 3px)"></div>
<span class="t" style="left:0.9px;top:486.0px;transform:scaleX(0.8579);">Block Details</span>
<div class="dbtn" style="left:381px;top:488px"><svg class="a" style="left:0;top:0" width="9" height="9" viewBox="0 0 9 9"><rect x="3.5" y="1.5" width="4" height="4" fill="none" stroke="#9a9a9a"/><rect x="1.5" y="3.5" width="4" height="4" fill="#3c3c3c" stroke="#9a9a9a"/></svg></div><div class="dbtn" style="left:395px;top:488px"><svg class="a" style="left:0;top:0" width="9" height="9" viewBox="0 0 9 9"><path d="M2 2L7 7M7 2L2 7" stroke="#8c8c8c" stroke-width="2.2" stroke-linecap="round"/></svg></div>
<svg class="a" style="left:360px;top:512px" width="14" height="16" viewBox="0 0 14 16"><defs><linearGradient id="cg520" x1="0" y1="0" x2="0" y2="1"><stop offset="0" stop-color="#666"/><stop offset="1" stop-color="#eee"/></linearGradient><linearGradient id="cu520" x1="0" y1="1" x2="0" y2="0"><stop offset="0" stop-color="#666"/><stop offset="1" stop-color="#eee"/></linearGradient></defs><path d="M2.5 3L7 7.5L11.5 3M2.5 8L7 12.5L11.5 8" fill="none" stroke="url(#cg520)" stroke-width="2.1"/></svg><svg class="a" style="left:386px;top:510px" width="14" height="16" viewBox="0 0 14 16"><path d="M2.5 7.5L7 3L11.5 7.5M2.5 12.5L7 8L11.5 12.5" fill="none" stroke="url(#cu520)" stroke-width="2.1"/></svg>
<div class="hdr" style="left:3px;top:532px;width:134px;border-right:1px solid #646464"></div><div class="hdr" style="left:137px;top:532px;width:252px;border-left:1px solid #2c2c2c"></div><span class="t" style="left:4.8px;top:532.5px;transform:scaleX(1.0058);">Name</span><span class="t" style="left:139.5px;top:532.5px;transform:scaleX(0.9665);">Value</span>
<div class="row r0" style="top:551px"></div>
<span class="t" style="left:26.4px;top:551.5px;transform:scaleX(0.9544);">Source Texture</span>
<span class="t" style="left:140.8px;top:551.5px;transform:scaleX(0.9968);">Textures\Fray\RunicCollar\FullAlpha.dds</span>
<div class="row r1" style="top:569px"></div>
<span class="t" style="left:26.4px;top:569.5px;transform:scaleX(0.9763);">Texture Clamp Mo...</span>
<span class="t" style="left:140.8px;top:569.5px;transform:scaleX(0.9892);">3</span>
<div class="row r0" style="top:587px"></div>
<span class="t" style="left:26.4px;top:587.5px;transform:scaleX(1.0197);">Lighting Influence</span>
<span class="t" style="left:140.8px;top:587.5px;transform:scaleX(0.9193);">255</span>
<div class="row r1" style="top:605px"></div>
<span class="t" style="left:26.4px;top:605.5px;transform:scaleX(0.9713);">Env Map Min LOD</span>
<span class="t" style="left:140.8px;top:605.5px;transform:scaleX(0.9892);">0</span>
<div class="row r0" style="top:623px"></div>
<span class="t" style="left:26.4px;top:623.5px;transform:scaleX(0.9928);">Unknown Byte</span>
<span class="t" style="left:140.8px;top:623.5px;transform:scaleX(0.9892);">0</span>
<div class="row r1" style="top:641px"></div>
<span class="t" style="left:26.4px;top:641.5px;transform:scaleX(0.9908);">Falloff Start Angle</span>
<span class="t" style="left:140.8px;top:641.5px;transform:scaleX(0.9074);">0.906308</span>
<div class="row r0" style="top:659px"></div>
<span class="t" style="left:26.4px;top:659.5px;transform:scaleX(0.9977);">Falloff Stop Angle</span>
<span class="t" style="left:140.8px;top:659.5px;transform:scaleX(0.9074);">0.087156</span>
<div class="row r1" style="top:677px"></div>
<span class="t" style="left:26.4px;top:677.5px;transform:scaleX(0.9847);">Falloff Start Opacity</span>
<span class="t" style="left:140.8px;top:677.5px;transform:scaleX(0.9074);">1.000000</span>
<div class="row r0" style="top:695px"></div>
<span class="t" style="left:26.4px;top:695.5px;transform:scaleX(0.9909);">Falloff Stop Opacity</span>
<span class="t" style="left:140.8px;top:695.5px;transform:scaleX(0.9074);">0.000000</span>
<div class="row r1" style="top:713px"></div>
<span class="t" style="left:26.4px;top:713.5px;transform:scaleX(0.9596);">Emissive Color</span>
<div class="a" style="left:138px;top:713px;width:251px;height:18px;background:#ff8c8c"></div>
<div class="a" style="left:138px;top:713px;width:16px;height:16px;border-radius:50%;background:conic-gradient(from 90deg,#f00,#f0f,#00f,#0ff,#0f0,#ff0,#f00)"></div>
<span class="t" style="left:157.3px;top:713.5px;transform:scaleX(1.0336);">#ff8c8cff</span>
<div class="row r0" style="top:731px"></div>
<span class="t" style="left:26.4px;top:731.5px;transform:scaleX(0.9881);">Emissive Multiple</span>
<span class="t" style="left:140.8px;top:731.5px;transform:scaleX(0.9074);">1.000000</span>
<div class="row r1" style="top:749px"></div>
<span class="t" style="left:26.4px;top:749.5px;transform:scaleX(0.9875);">Soft Falloff Depth</span>
<span class="t" style="left:140.8px;top:749.5px;transform:scaleX(0.9041);">100.000000</span>
<div class="row r0" style="top:767px"></div>
<span class="t" style="left:26.4px;top:767.5px;transform:scaleX(0.9392);">Greyscale Texture</span>
<div class="sb" style="left:390px;top:532px;width:13px;height:260px"></div><div class="sbb" style="left:390px;top:532px;width:13px;height:13px"><svg class="a" style="left:1px;top:3px" width="9" height="5" viewBox="0 0 9 5"><path d="M0 4.6L4.5 0.2L9 4.6Z" fill="#d2d2d2"/></svg></div><div class="sbb" style="left:390px;top:779px;width:13px;height:13px"><svg class="a" style="left:1px;top:3px" width="9" height="5" viewBox="0 0 9 5"><path d="M0 0.4L4.5 4.8L9 0.4Z" fill="#d2d2d2"/></svg></div><div class="sbh" style="left:390px;top:635px;width:13px;height:143px"></div>
<div class="sb" style="left:3px;top:793px;width:386px;height:13px"></div>
<div class="sbb" style="left:3px;top:793px;width:13px;height:13px"><svg class="a" style="left:3px;top:1px" width="5" height="9" viewBox="0 0 5 9"><path d="M4.6 0L0.2 4.5L4.6 9Z" fill="#d2d2d2"/></svg></div>
<div class="sbb" style="left:376px;top:793px;width:13px;height:13px"><svg class="a" style="left:3px;top:1px" width="5" height="9" viewBox="0 0 5 9"><path d="M0.4 0L4.8 4.5L0.4 9Z" fill="#d2d2d2"/></svg></div>
<div class="sbh" style="left:17px;top:793px;width:219px;height:13px;background:linear-gradient(#484848,#424242)"></div>
<div class="a" style="left:389px;top:148px;width:1px;height:304px;background:#303030"></div><div class="a" style="left:389px;top:532px;width:1px;height:261px;background:#303030"></div><div class="a" style="left:3px;top:792px;width:400px;height:1px;background:#2f2f2f"></div>
<svg class="a" style="left:414px;top:99px" width="861" height="707" viewBox="414 99 861 707">
<defs><radialGradient id="pg" gradientUnits="userSpaceOnUse" cx="846" cy="433" r="177"><stop offset="0" stop-color="#ffc1c1"/><stop offset="0.07" stop-color="#ffb3b3"/><stop offset="0.15" stop-color="#ffa2a2"/><stop offset="0.25" stop-color="#ed9797"/><stop offset="0.33" stop-color="#db8d8d"/><stop offset="0.48" stop-color="#c27f7f"/><stop offset="0.68" stop-color="#9c6a6a"/><stop offset="0.8" stop-color="#855e5e"/><stop offset="0.9" stop-color="#795757"/><stop offset="1.0" stop-color="#755555"/></radialGradient>
<clipPath id="oc"><polygon points="846.0,254.0 971.3,306.0 1022.5,430.7 971.3,555.7 846.0,607.2 721.0,555.7 669.5,430.7 721.6,306.0"/></clipPath>
<path id="gm" d="M414 784.10H1275 M414 537.83H1275 M414 501.50H1275 M414 486.88H1275 M414 479.00H1275 M414 474.06H1275 M414 470.68H1275 M414 468.22H1275 M414 466.35H1275 M262.76 466.35L300.00 465.47 M335.67 466.35L300.00 467.31 M408.57 466.35L300.00 469.76 M481.48 466.35L300.00 473.19 M554.38 466.35L300.00 478.34 M627.29 466.35L300.00 486.91 M700.19 466.35L300.00 504.07 M773.10 466.35L300.00 555.54 M846.00 466.35L846.00 806.00 M918.90 466.35L1400.00 557.05 M991.81 466.35L1400.00 504.82 M1064.71 466.35L1400.00 487.42 M1137.62 466.35L1400.00 478.71 M1210.52 466.35L1400.00 473.49 M1283.43 466.35L1400.00 470.01 M1356.33 466.35L1400.00 467.52 M1429.24 466.35L1400.00 465.66"/><path id="gn" d="M414 588.19H1275 M414 514.74H1275 M414 492.91H1275 M414 482.43H1275 M414 476.27H1275 M414 472.22H1275 M414 469.36H1275 M414 467.22H1275 M299.22 466.35L300.00 466.33 M372.12 466.35L300.00 468.44 M445.02 466.35L300.00 471.32 M517.93 466.35L300.00 475.48 M590.83 466.35L300.00 482.01 M663.74 466.35L300.00 493.78 M736.64 466.35L300.00 521.23 M809.55 466.35L300.00 658.48 M882.45 466.35L1400.00 661.50 M955.36 466.35L1400.00 522.23 M1028.26 466.35L1400.00 494.38 M1101.17 466.35L1400.00 482.44 M1174.07 466.35L1400.00 475.81 M1246.98 466.35L1400.00 471.59 M1319.88 466.35L1400.00 468.67 M1392.78 466.35L1400.00 466.53"/></defs>
<rect x="414" y="99" width="861" height="707" fill="#2e2e2e"/>
<g fill="none" stroke-width="1"><use href="#gm" stroke="rgba(255,255,255,0.25)"/><use href="#gn" stroke="rgba(255,255,255,0.085)"/></g>
<rect x="414" y="99" width="1" height="707" fill="#2e2e2e"/>
<polygon points="846.0,254.0 971.3,306.0 1022.5,430.7 971.3,555.7 846.0,607.2 721.0,555.7 669.5,430.7 721.6,306.0" fill="url(#pg)"/>
<g fill="none" stroke-width="1" clip-path="url(#oc)"><use href="#gm" stroke="rgba(255,255,255,0.25)"/><use href="#gn" stroke="rgba(255,255,255,0.085)"/></g>
<polygon points="845.8,439.4 883.6,441.8 911.4,445.6 935.7,450.8 956.6,456.9 974.8,464.7 989.6,474.3 1002.6,487.3 1007.4,502.0 1001.6,518.6 978.2,536.2 947.0,549.6 901.0,559.3 845.8,563.1 790.6,559.3 744.6,549.6 713.4,536.2 690.0,518.6 684.2,502.0 689.0,487.3 702.0,474.3 716.8,464.7 735.0,456.9 755.9,450.8 780.2,445.6 808.0,441.8" fill="#fff"/>
<g stroke-width="2" stroke-linecap="round"><path d="M458 762V738.8" stroke="#2a2aff"/><path d="M458 762H434.8" stroke="#ff2a2a"/><circle cx="458" cy="738.6" r="1.7" fill="#2a2aff"/><circle cx="434.6" cy="762" r="1.7" fill="#ff2a2a"/><circle cx="458" cy="762" r="1.9" fill="#4f4"/><circle cx="457.8" cy="761.8" r="0.9" fill="#ffc"/></g>
</svg>
</body></html>
